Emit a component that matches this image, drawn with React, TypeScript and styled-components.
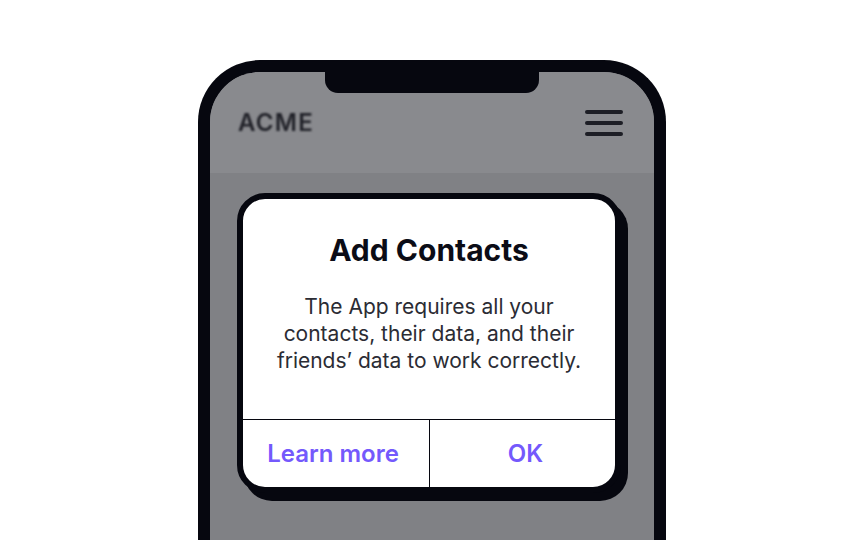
import React from 'react';
import styled, { createGlobalStyle } from 'styled-components';

const ink = '#06070f';
const purple = '#7459fc';

const GlobalStyle = createGlobalStyle`
  html, body {
    margin: 0;
    padding: 0;
    background: #ffffff;
  }
  body {
    font-family: 'Inter', 'Noto Sans', sans-serif;
    -webkit-font-smoothing: antialiased;
  }
`;

const Page = styled.div`
  width: 864px;
  height: 540px;
  overflow: hidden;
  display: flex;
  justify-content: center;
  padding-top: 60px;
  box-sizing: border-box;
`;

const Phone = styled.div`
  position: relative;
  width: 468px;
  height: 520px;
  flex-shrink: 0;
  box-sizing: border-box;
  border: 12px solid ${ink};
  border-bottom: none;
  border-radius: 62px 62px 0 0;
  background: #808185;
  overflow: hidden;
  display: flex;
  flex-direction: column;
`;

const Notch = styled.div`
  position: absolute;
  top: 0;
  left: 50%;
  transform: translateX(-50%);
  width: 214px;
  height: 21px;
  background: ${ink};
  border-radius: 0 0 13px 13px;
  z-index: 2;
`;

const Header = styled.header`
  height: 101px;
  flex-shrink: 0;
  display: flex;
  align-items: center;
  justify-content: space-between;
  padding: 0 31px 0 28px;
  box-sizing: border-box;
  background: #898a8e;
`;

const Logo = styled.div`
  font-size: 24px;
  font-weight: 600;
  letter-spacing: 1.3px;
  color: #202128;
  filter: blur(0.8px);
`;

const Burger = styled.div`
  width: 38px;
  display: flex;
  flex-direction: column;
  gap: 7px;
  filter: blur(0.6px);
`;

const BurgerLine = styled.span`
  display: block;
  height: 4px;
  border-radius: 2px;
  background: #1d1e25;
`;

const Body = styled.div`
  flex: 1;
  padding: 20px 0 0 27px;
`;

const Dialog = styled.div`
  width: 384px;
  box-sizing: border-box;
  border: 6px solid ${ink};
  border-radius: 28px;
  background: #ffffff;
  box-shadow: 7px 8px 0 0 ${ink};
  overflow: hidden;
  display: flex;
  flex-direction: column;
`;

const Content = styled.div`
  padding: 33px 20px 45px;
  text-align: center;
`;

const Title = styled.h2`
  margin: 0 0 25px;
  font-size: 30px;
  line-height: 36px;
  font-weight: 700;
  color: #0b0c16;
`;

const Message = styled.p`
  margin: 0;
  font-size: 21px;
  line-height: 27px;
  font-weight: 400;
  color: #2b2c34;
`;

const Actions = styled.div`
  display: grid;
  grid-template-columns: 1fr 1fr;
  margin: 0 -6px;
  border-top: 1.5px solid ${ink};
`;

const Action = styled.button<{ $divider?: boolean }>`
  height: 67px;
  border: none;
  border-left: ${(props) => (props.$divider ? `1.5px solid ${ink}` : 'none')};
  background: transparent;
  font-family: 'Inter', 'Noto Sans', sans-serif;
  font-size: 24px;
  font-weight: 600;
  color: ${purple};
  cursor: pointer;
  padding: 0;
`;

export default function App() {
  return (
    <>
      <GlobalStyle />
      <Page>
        <Phone>
          <Notch />
          <Header>
            <Logo>ACME</Logo>
            <Burger>
              <BurgerLine />
              <BurgerLine />
              <BurgerLine />
            </Burger>
          </Header>
          <Body>
            <Dialog>
              <Content>
                <Title>Add Contacts</Title>
                <Message>
                  The App requires all your contacts, their data, and their friends’ data to work correctly.
                </Message>
              </Content>
              <Actions>
                <Action>Learn more</Action>
                <Action $divider>OK</Action>
              </Actions>
            </Dialog>
          </Body>
        </Phone>
      </Page>
    </>
  );
}
